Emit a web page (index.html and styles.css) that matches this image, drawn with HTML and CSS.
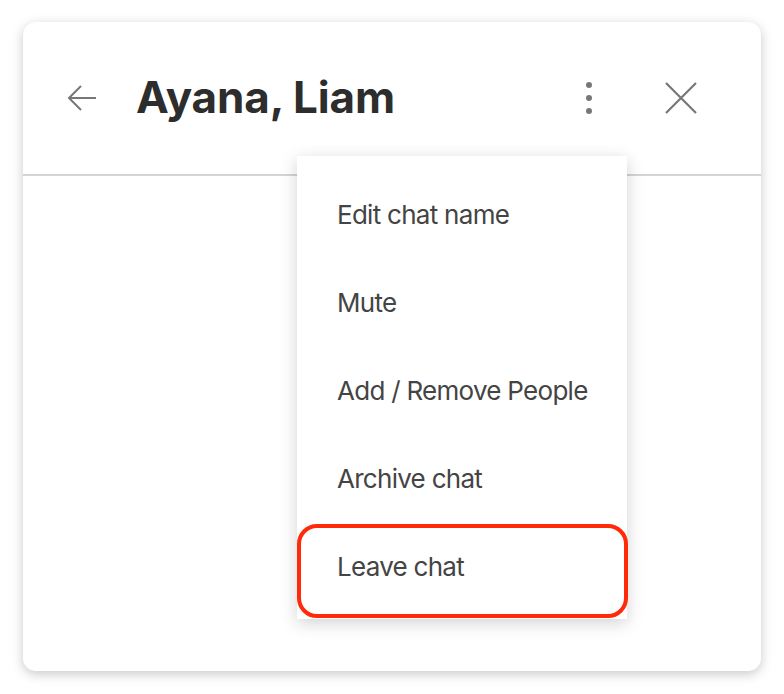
FILE: index.html
```html
<!DOCTYPE html>
<html>
<head>
<meta charset="utf-8">
<link rel="stylesheet" href="styles.css">
</head>
<body>
<div class="card">
  <header class="header">
    <button class="icon-btn back" aria-label="Back">
      <svg width="30" height="28" viewBox="0 0 30 28"><path d="M29 14H2M14 2L2 14l12 12" fill="none" stroke="#777" stroke-width="2"/></svg>
    </button>
    <h1 class="title">Ayana, Liam</h1>
    <button class="icon-btn more" aria-label="More">
      <svg width="10" height="32" viewBox="0 0 10 32"><circle cx="5" cy="3" r="3" fill="#777"/><circle cx="5" cy="16" r="3" fill="#777"/><circle cx="5" cy="29" r="3" fill="#777"/></svg>
    </button>
    <button class="icon-btn close" aria-label="Close">
      <svg width="32" height="32" viewBox="0 0 32 32"><path d="M1 1L31 31M31 1L1 31" fill="none" stroke="#777" stroke-width="2.2"/></svg>
    </button>
  </header>
  <ul class="menu">
    <li class="item">Edit chat name</li>
    <li class="item">Mute</li>
    <li class="item">Add / Remove People</li>
    <li class="item">Archive chat</li>
    <li class="item highlighted">Leave chat</li>
  </ul>
</div>
</body>
</html>
```
FILE: styles.css
```css
* { box-sizing: border-box; }
html, body { margin: 0; padding: 0; background: #fff; }
body {
  font-family: Inter, "Noto Sans", "Liberation Sans", sans-serif;
  padding: 22px 23px;
}
.card {
  position: relative;
  width: 738px;
  height: 649px;
  background: #fff;
  border-radius: 13px;
  box-shadow: 0 3px 12px rgba(0,0,0,0.22);
}
.header {
  height: 154px;
  border-bottom: 2px solid #d4d4d4;
  display: flex;
  align-items: center;
  padding: 0 64px 0 44px;
}
.icon-btn {
  border: 0;
  background: none;
  padding: 0;
  display: flex;
  align-items: center;
  justify-content: center;
}
.back { width: 30px; margin-right: 39px; }
.title {
  margin: 0 0 2px;
  flex: 1;
  font-size: 44px;
  line-height: 1;
  font-weight: 700;
  letter-spacing: -0.15px;
  color: #2d2d2d;
}
.more { width: 10px; margin-right: 71px; }
.close { width: 32px; }
.menu {
  position: absolute;
  left: 274px;
  top: 134px;
  width: 330px;
  margin: 0;
  padding: 14px 0 9px;
  list-style: none;
  background: #fff;
  box-shadow: 0 4px 16px rgba(0,0,0,0.18);
}
.item {
  position: relative;
  height: 88px;
  display: flex;
  align-items: center;
  padding-left: 40px;
  font-size: 26px;
  color: #444;
  letter-spacing: -0.72px;
}
.highlighted::after {
  content: "";
  position: absolute;
  left: 0;
  right: -1px;
  top: 2px;
  bottom: -8px;
  border: 4px solid #ff2a0a;
  border-radius: 20px;
}
```
